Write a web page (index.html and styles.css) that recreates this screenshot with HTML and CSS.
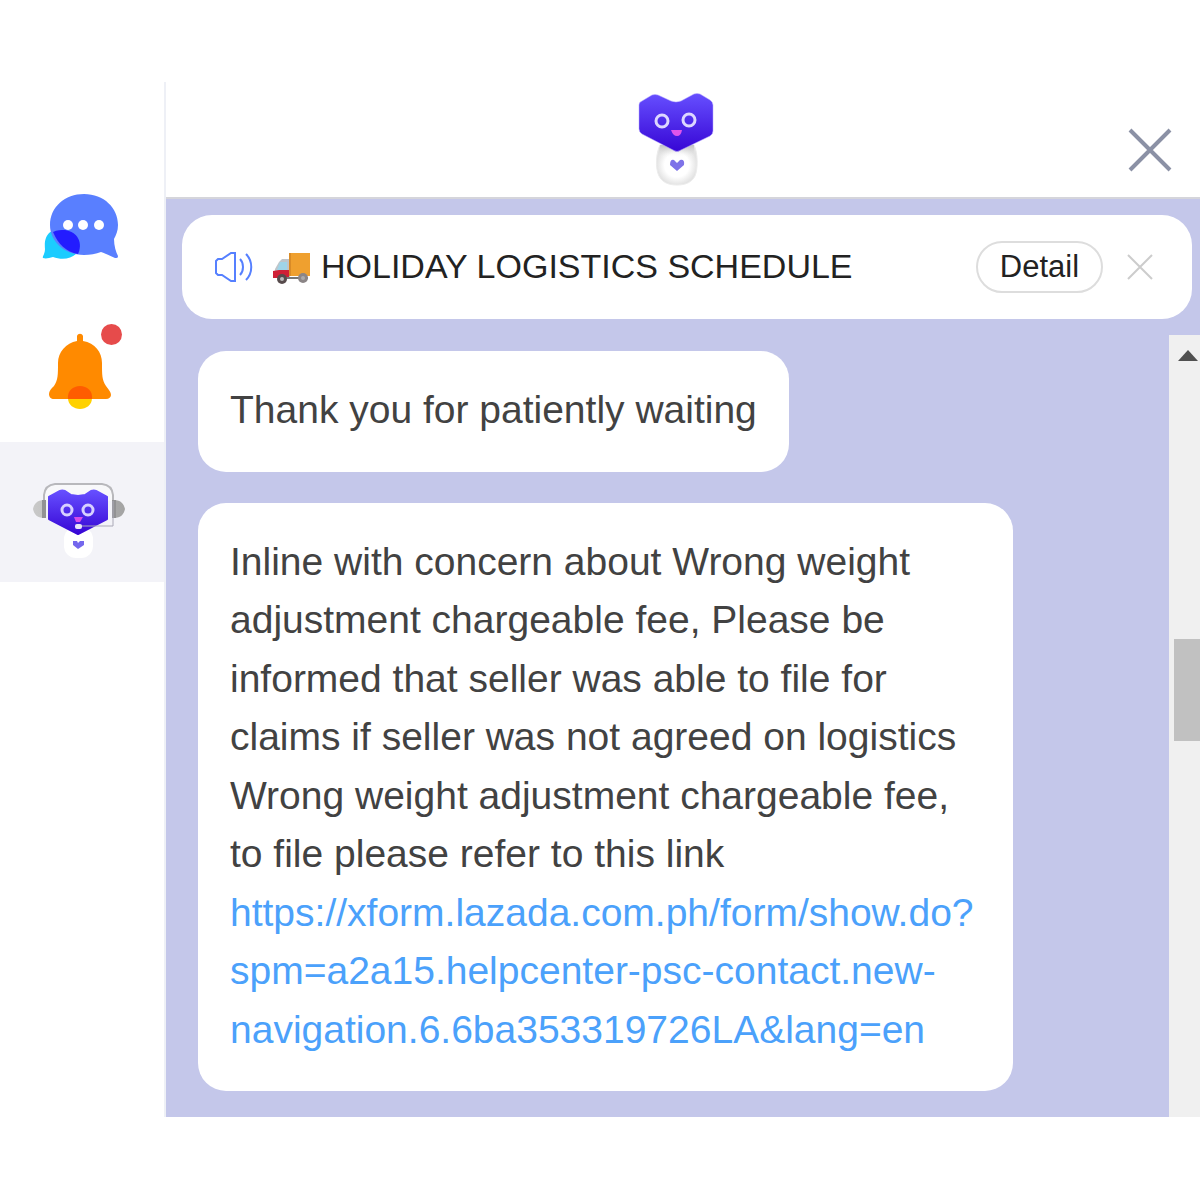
FILE: index.html
```html
<!DOCTYPE html>
<html lang="en">
<head>
<meta charset="utf-8">
<meta name="viewport" content="width=device-width, initial-scale=1">
<title>Support chat</title>
<link rel="stylesheet" href="styles.css">
</head>
<body>
<div class="app">
  <nav class="sidebar" aria-label="Sections">
    <button class="tab" type="button" aria-label="Messages">
      <svg width="76" height="78" viewBox="0 0 76 78">
        <path fill="#1cccff" d="M3 56C1 36 16 35 23 37c12 1 17 11 14 19-3 9-15 12-26 8-4 1-7 2-10 1-1-1 2-4 2-9z"/>
        <path fill="#597fff" d="M42 1c20 0 34 14 34 31 0 6-2 10-4 14 0 7 2 13 4 17 0 2-1 2-3 2-5-2-10-5-14-6-5 2-11 3-17 3C22 62 8 48 8 32 8 14 23 1 42 1z"/>
        <path fill="#231cff" d="M11 39c4-2 8-2 12-2 13 2 18 13 13 24-12-2-20-10-25-22z"/>
        <g fill="#fff"><circle cx="26" cy="32" r="5"/><circle cx="41" cy="32" r="5"/><circle cx="57" cy="32" r="5"/></g>
      </svg>
    </button>
    <button class="tab" type="button" aria-label="Notifications">
      <span class="bell">
        <svg width="64" height="78" viewBox="0 0 64 78">
          <path fill="#ff8a00" d="M29 3c1-3 5-3 6 0v5c12 2 19 11 19 22 0 12 0 17 4 23 3 4 5 6 5 9 0 2-2 4-5 4H6c-3 0-5-2-5-5s2-5 5-8c4-6 4-11 4-23C10 19 18 10 29 8z"/>
          <path fill="#ffd100" d="M20 65h24c0 7-6 11-12 11s-12-4-12-11z"/>
          <path fill="#ff5c00" d="M20 66c-1-8 5-13 12-13s13 5 12 13z"/>
        </svg>
        <span class="dot"></span>
      </span>
    </button>
    <button class="tab tab-active" type="button" aria-label="Assistant">
      <svg width="94" height="94" viewBox="1 -16 94 94">
        <defs>
          <linearGradient id="face" x1="0" y1="0" x2="0" y2="1"><stop offset="0" stop-color="#664fff"/><stop offset="1" stop-color="#3706d5"/></linearGradient>
          <linearGradient id="pod" x1="0" y1="0" x2="1" y2="0"><stop offset="0" stop-color="#c9c9c9"/><stop offset="1" stop-color="#a3a3a3"/></linearGradient>
        </defs>
        <rect x="32" y="46" width="29" height="31" rx="12" fill="#fff"/>
        <path d="M12 20V14Q13 4 23 3H70Q80 4 81 14V20" fill="#f8f8fa" stroke="#b8b8bc" stroke-width="2"/>
        <path d="M12 19v18C5 37 2 33 1 28c1-5 4-9 11-9zM82 19v18c7 0 10-4 11-9-1-5-4-9-11-9z" fill="url(#pod)"/>
        <path d="M10 19h4v18h-4zM80 19h4v18h-4z" fill="#929294"/>
        <path d="M17 16L28 10q2-1 5 0l6 4 7 1 7-1 6-4q3-1 5 0l11 6v22L46 53 17 38z" fill="url(#face)" stroke="url(#face)" stroke-width="2" stroke-linejoin="round"/>
        <g fill="none" stroke="#d7d0ff" stroke-width="3"><circle cx="35" cy="29" r="5"/><circle cx="56" cy="29" r="5"/></g>
        <path d="M42 36h9l-3 5h-4z" fill="#d64be8"/>
        <path d="M49 45h32V20" fill="none" stroke="#aaa9b7"/>
        <rect x="43" y="43" width="7" height="5" rx="2" fill="#e8e5f8"/>
        <path d="M46 68l-5-4v-4h4l1 2 2-2h4v4z" fill="#7467ed"/>
      </svg>
    </button>
  </nav>
  <main class="chat">
    <header class="chat-head">
      <svg class="mascot" width="80" height="98" viewBox="0 2 80 98">
        <defs>
          <radialGradient id="body"><stop offset="0.6" stop-color="#fff"/><stop offset="1" stop-color="#e3e3e3"/></radialGradient>
          <linearGradient id="neck" x1="0" y1="0" x2="0" y2="1"><stop offset="0" stop-color="#aaa"/><stop offset="1" stop-color="#fff" stop-opacity="0"/></linearGradient>
        </defs>
        <path d="M24 56h34c4 8 4 24 1 31-3 6-9 9-18 9s-15-3-18-9c-4-8-3-23 1-31z" fill="url(#body)" stroke="#ececec"/>
        <path d="M24 56h34v13H22z" fill="url(#neck)" opacity=".6"/>
        <path d="M3 16q0-3 3-4L16 6q3-1 6 0l13 6q5 2 10 0l13-7q3-1 6 0l10 6q3 2 3 5v26q0 3-3 5L45 61q-4 3-8 0L6 45q-3-2-3-5z" fill="url(#face)" stroke="#b8abff" stroke-opacity=".5"/>
        <g fill="none" stroke="#ddd7ff" stroke-width="3"><circle cx="26" cy="32" r="6"/><circle cx="53" cy="31" r="6"/></g>
        <path d="M35 41h11q-1 6-5 6t-6-6z" fill="#df55ea"/>
        <path d="M41 82l-7-6q0-6 4-5l3 3 3-3q5-1 4 5z" fill="#7e72e8"/>
      </svg>
      <button class="close" type="button" aria-label="Close chat">
        <svg width="44" height="44" viewBox="0 0 44 44"><path d="M2 2l40 40M42 2L2 42" stroke="#8b91a5" stroke-width="4"/></svg>
      </button>
    </header>
    <section class="notice">
      <svg class="speaker" width="40" height="32" viewBox="0 0 40 32"><path d="M2 10l2-2h4l9-6h4v28h-4l-9-6H4l-2-2V10zM26 8c4 4 4 12 0 16M32 3c7 7 7 19 0 26" fill="none" stroke="#5680ff" stroke-width="2"/></svg>
      <svg class="truck" width="40" height="32" viewBox="0 0 40 32">
        <path d="M7 10l3-3h8v19H2l1-9z" fill="#bfc5ca"/>
        <path d="M8 10h7v8H5z" fill="#9fd4e8"/>
        <path d="M1 19l6-1h10v8H1z" fill="#cf2036"/>
        <path d="M13 25h23v2H13z" fill="#777"/>
        <path d="M17 1h21v23H17z" fill="#efa02f"/>
        <path d="M17 1h2v23h-2z" fill="#d98b27"/>
        <circle cx="10" cy="27" r="5" fill="#574b4c"/><circle cx="10" cy="27" r="2" fill="#bbb"/>
        <circle cx="31" cy="26" r="5" fill="#8b8586"/><circle cx="31" cy="26" r="2" fill="#aaa"/>
      </svg>
      <h1 class="notice-title">HOLIDAY LOGISTICS SCHEDULE</h1>
      <button class="detail" type="button">Detail</button>
      <button class="dismiss" type="button" aria-label="Dismiss notice">
        <svg width="26" height="26" viewBox="0 0 26 26"><path d="M1 1l24 24M25 1L1 25" stroke="#ccc" stroke-width="2"/></svg>
      </button>
    </section>
    <div class="feed">
      <div class="messages">
        <p class="bubble">Thank you for patiently waiting</p>
        <p class="bubble">Inline with concern about Wrong weight adjustment chargeable fee, Please be informed that seller was able to file for claims if seller was not agreed on logistics Wrong weight adjustment chargeable fee, to file please refer to this link <a href="https://xform.lazada.com.ph/form/show.do?spm=a2a15.helpcenter-psc-contact.new-navigation.6.6ba353319726LA&amp;lang=en">https://xform.lazada.com.ph/form/show.do?<wbr>spm=a2a15.helpcenter-psc-contact.new-<wbr>navigation.6.6ba353319726LA&amp;lang=en</a></p>
      </div>
      <div class="scrollbar" aria-hidden="true">
        <svg class="arrow" width="20" height="11" viewBox="0 0 20 11"><path d="M0 11L10 0l10 11z" fill="#505050"/></svg>
        <div class="thumb"></div>
      </div>
    </div>
  </main>
</div>
</body>
</html>
```
FILE: styles.css
```css
* { box-sizing: border-box; }

body {
  margin: 0;
  padding: 82px 0;
  background: #fff;
  color: #424242;
  font-family: "Liberation Sans", Arial, sans-serif;
}

button {
  padding: 0;
  border: 0;
  background: none;
  font-family: inherit;
  cursor: pointer;
}

svg { display: block; flex: none; }

.app { display: flex; }

.sidebar {
  flex: none;
  width: 166px;
  padding-top: 80px;
  border-right: 2px solid #eef0f6;
}

.tab {
  display: flex;
  align-items: center;
  justify-content: center;
  width: 100%;
  height: 140px;
  padding-right: 4px;
}

.tab-active { background: #f3f3f8; }

.bell { position: relative; }

.dot {
  position: absolute;
  top: -9px;
  right: -10px;
  width: 21px;
  height: 21px;
  border-radius: 50%;
  background: #e64b4b;
}

.chat {
  display: flex;
  flex-direction: column;
  flex: 1;
  min-width: 0;
  background: #c4c7ea;
}

.chat-head {
  display: grid;
  grid-template-columns: 1fr auto 1fr;
  align-items: center;
  height: 117px;
  padding: 0 28px 0 14px;
  border-bottom: 2px solid #d5d5db;
  background: #fff;
}

.mascot { grid-column: 2; }

.close {
  justify-self: end;
  margin-top: 20px;
}

.notice {
  display: flex;
  align-items: center;
  height: 104px;
  margin: 16px 8px 16px 16px;
  padding: 0 39px 0 32px;
  border-radius: 30px;
  background: #fff;
}

.truck { margin: 2px 9px 0 18px; }

.notice-title {
  flex: 1;
  margin: 0;
  padding-bottom: 2px;
  color: #222;
  font-size: 34px;
  font-weight: 400;
  line-height: 40px;
  white-space: nowrap;
}

.detail {
  width: 127px;
  height: 52px;
  margin-right: 24px;
  border: 2px solid #ddd;
  border-radius: 26px;
  color: #222;
  font-size: 31px;
}

.feed {
  display: flex;
  flex: 1;
}

.messages {
  display: flex;
  flex: 1;
  flex-direction: column;
  align-items: flex-start;
  gap: 31px;
  padding: 16px 32px 26px;
}

.bubble {
  max-width: 815px;
  margin: 0;
  padding: 30px 32px 32px;
  border-radius: 28px;
  background: #fff;
  font-size: 39px;
  line-height: 1.5;
}

.bubble a {
  color: #4ba1fb;
  text-decoration: none;
}

.scrollbar {
  flex: none;
  width: 31px;
  padding: 15px 0 0 5px;
  overflow: hidden;
  background: #f0f0f0;
}

.arrow { margin-left: 4px; }

.thumb {
  height: 102px;
  margin-top: 278px;
  background: #c1c1c1;
}
```
